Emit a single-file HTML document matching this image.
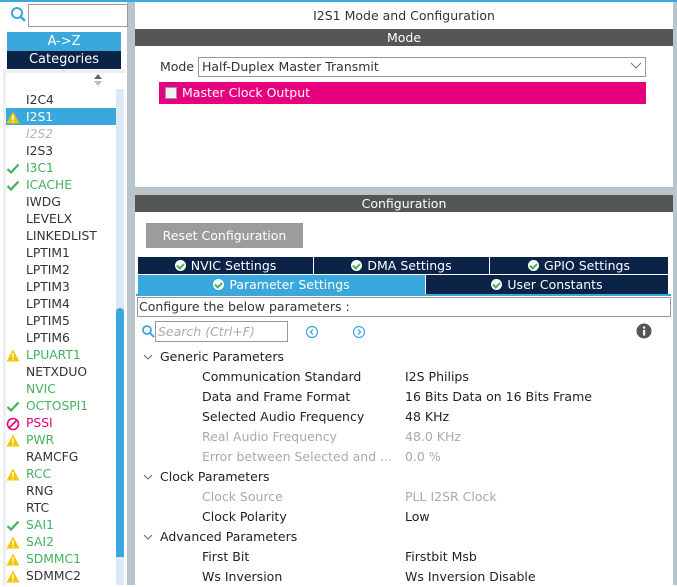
<!DOCTYPE html>
<html><head><meta charset="utf-8"><style>
*{margin:0;padding:0;box-sizing:border-box}
body{width:677px;height:585px;overflow:hidden;background:#fff;font-family:"DejaVu Sans","Liberation Sans",sans-serif;font-size:12.5px;color:#333;position:relative}
.a{position:absolute}
.it{position:absolute;left:26px;height:17px;line-height:17px;font-size:12.3px;color:#333}
.ic{position:absolute;left:-20px;top:0;width:16px;text-align:center}
.tab{position:absolute;background:#0b2347;color:#fff;text-align:center;font-size:12.5px;line-height:17px}
.ck{display:inline-block;width:11px;height:11px;border-radius:50%;background:#fff;position:relative;vertical-align:-1px;margin-right:5px}
.ck::after{content:"";position:absolute;left:3px;top:2px;width:3px;height:5px;border:solid #44b060;border-width:0 2px 2px 0;transform:rotate(45deg)}
.row{position:absolute;font-size:12.5px;line-height:20px;height:20px}
</style></head><body>
<div class="a" style="left:0;top:0;width:677px;height:2px;background:#3aa8dc"></div>
<div class="a" style="left:127px;top:2px;width:8px;height:583px;background:#b9c4cb"></div>
<div class="a" style="left:673px;top:2px;width:4px;height:583px;background:#b9c4cb"></div>
<svg class="a" style="left:10px;top:6px" width="18" height="18"><circle cx="7" cy="7" r="5" fill="none" stroke="#3aa8dc" stroke-width="2"/><line x1="11" y1="11" x2="15" y2="15" stroke="#3aa8dc" stroke-width="2.4"/></svg>
<div class="a" style="left:28px;top:4px;width:100px;height:23px;border:1px solid #999;background:#fff"></div>
<div class="a" style="left:7px;top:32px;width:114px;height:19px;background:#3aa8dc;color:#fff;text-align:center;line-height:19px;font-size:13px">A-&gt;Z</div>
<div class="a" style="left:7px;top:51px;width:114px;height:18px;background:#0b2347;color:#fff;text-align:center;line-height:18px;font-size:13px">Categories</div>
<div class="a" style="left:3px;top:70px;width:122px;height:515px;border-left:3px solid #eceff1;border-top:3px solid #eceff1"></div>
<div class="a" style="left:94px;top:74px;width:0;height:0;border:4px solid transparent;border-bottom:5px solid #666;border-top:0"></div>
<div class="a" style="left:94px;top:81px;width:0;height:0;border:4px solid transparent;border-top:5px solid #bbb;border-bottom:0"></div>
<div class="a" style="left:116px;top:89px;width:8px;height:496px;background:#dce9f5"></div>
<div class="a" style="left:116px;top:308px;width:8px;height:249px;background:#3aa8dc;border-radius:4px 4px 0 0"></div>
<div class="a" style="left:6px;top:108px;width:110px;height:17px;background:#3aa8dc"></div>
<div id="list"></div>
<div class="a" style="left:135px;top:7px;width:538px;text-align:center;font-size:12.5px;line-height:18px;color:#333">I2S1 Mode and Configuration</div>
<div class="a" style="left:135px;top:29px;width:538px;height:17px;background:#555756;color:#fff;text-align:center;line-height:17px;font-size:12.5px">Mode</div>
<div class="a" style="left:160px;top:58px;line-height:18px">Mode</div>
<div class="a" style="left:198px;top:57px;width:448px;height:20px;border:1px solid #999;line-height:18px;padding-left:3px">Half-Duplex Master Transmit</div>
<svg class="a" style="left:630px;top:62px" width="12" height="8"><polyline points="1,1 6,6 11,1" fill="none" stroke="#777" stroke-width="1"/></svg>
<div class="a" style="left:159px;top:82px;width:487px;height:22px;background:#e6007e;color:#fff;line-height:22px;padding-left:23px">Master Clock Output</div>
<div class="a" style="left:165px;top:87px;width:12px;height:12px;background:#f2f2f2;border:1px solid #999"></div>
<div class="a" style="left:135px;top:187px;width:538px;height:8px;background:#b9c4cb"></div>
<div class="a" style="left:135px;top:195px;width:538px;height:17px;background:#555756;color:#fff;text-align:center;line-height:17px">Configuration</div>
<div class="a" style="left:146px;top:223px;width:157px;height:25px;background:#9a9c9e;color:#fff;text-align:center;line-height:25px">Reset Configuration</div>
<div class="tab" style="left:138px;top:257px;width:175px;height:17px"><span class="ck"></span>NVIC Settings</div>
<div class="tab" style="left:314px;top:257px;width:175px;height:17px"><span class="ck"></span>DMA Settings</div>
<div class="tab" style="left:490px;top:257px;width:178px;height:17px"><span class="ck"></span>GPIO Settings</div>
<div class="tab" style="left:138px;top:275px;width:287px;height:19px;background:#3aa8dc;line-height:19px"><span class="ck"></span>Parameter Settings</div>
<div class="tab" style="left:426px;top:275px;width:242px;height:19px;line-height:19px"><span class="ck"></span>User Constants</div>
<div class="a" style="left:136px;top:294px;width:535px;height:2px;background:#3aa8dc"></div>
<div class="a" style="left:137px;top:297px;width:534px;height:20px;border:1px solid #999;line-height:18px;padding-left:1px">Configure the below parameters :</div>
<svg class="a" style="left:141px;top:324px" width="14" height="14"><circle cx="6" cy="6" r="4" fill="none" stroke="#3aa8dc" stroke-width="1.8"/><line x1="9" y1="9" x2="13" y2="13" stroke="#3aa8dc" stroke-width="2"/></svg>
<div class="a" style="left:155px;top:321px;width:133px;height:21px;border:1px solid #999;line-height:19px;padding-left:2px;color:#aaa;font-style:italic">Search (Ctrl+F)</div>
<svg class="a" style="left:305px;top:325px" width="14" height="14"><circle cx="7" cy="7" r="5.5" fill="none" stroke="#3aa8dc" stroke-width="1.2"/><polyline points="8,4.5 5.5,7 8,9.5" fill="none" stroke="#3aa8dc" stroke-width="1.3"/></svg>
<svg class="a" style="left:352px;top:325px" width="14" height="14"><circle cx="7" cy="7" r="5.5" fill="none" stroke="#3aa8dc" stroke-width="1.2"/><polyline points="6,4.5 8.5,7 6,9.5" fill="none" stroke="#3aa8dc" stroke-width="1.3"/></svg>
<svg class="a" style="left:636px;top:323px" width="16" height="16"><circle cx="8" cy="8" r="7.5" fill="#555"/><rect x="7" y="7" width="2.2" height="5.5" fill="#fff"/><circle cx="8.1" cy="4.6" r="1.2" fill="#fff"/></svg>
<div id="tree"></div>
<script>
var L=[["I2C4",""],["I2S1","w","#fff"],["I2S2","","#b5b5b5",1],["I2S3",""],["I3C1","c","g"],["ICACHE","c","g"],["IWDG",""],["LEVELX",""],["LINKEDLIST",""],["LPTIM1",""],["LPTIM2",""],["LPTIM3",""],["LPTIM4",""],["LPTIM5",""],["LPTIM6",""],["LPUART1","w","g"],["NETXDUO",""],["NVIC","","g"],["OCTOSPI1","c","g"],["PSSI","p","#e6007e"],["PWR","w","g"],["RAMCFG",""],["RCC","w","g"],["RNG",""],["RTC",""],["SAI1","c","g"],["SAI2","w","g"],["SDMMC1","w","g"],["SDMMC2","w"]];
var h="";L.forEach(function(r,i){var y=92+17*i;var col=r[2]=="g"?"#44b060":(r[2]||"#333");var ic="";
if(r[1]=="w")ic='<svg class="ic" style="top:2px" width="14" height="13"><polygon points="7,0.5 13.5,12.5 0.5,12.5" fill="#f5c400"/><rect x="6.3" y="4" width="1.4" height="5" fill="#fff"/><rect x="6.3" y="10" width="1.4" height="1.4" fill="#fff"/></svg>';
if(r[1]=="c")ic='<svg class="ic" style="top:2px" width="14" height="13"><polyline points="1.5,7 5,10.5 12.5,2.5" fill="none" stroke="#44b060" stroke-width="2.2"/></svg>';
if(r[1]=="p")ic='<svg class="ic" style="top:2px" width="14" height="14"><circle cx="7" cy="7" r="5.5" fill="none" stroke="#e6007e" stroke-width="1.6"/><line x1="3" y1="11" x2="11" y2="3" stroke="#e6007e" stroke-width="1.6"/></svg>';
h+='<div class="it" style="top:'+y+'px;color:'+col+(r[3]?';font-style:italic':'')+'">'+ic+r[0]+'</div>';});
document.getElementById("list").innerHTML=h;
var T=[[0,"Generic Parameters"],[1,"Communication Standard","I2S Philips"],[1,"Data and Frame Format","16 Bits Data on 16 Bits Frame"],[1,"Selected Audio Frequency","48 KHz"],[2,"Real Audio Frequency","48.0 KHz"],[2,"Error between Selected and ...","0.0 %"],[0,"Clock Parameters"],[2,"Clock Source","PLL I2SR Clock"],[1,"Clock Polarity","Low"],[0,"Advanced Parameters"],[1,"First Bit","Firstbit Msb"],[1,"Ws Inversion","Ws Inversion Disable"]];
h="";T.forEach(function(r,i){var y=347+20*i;
if(r[0]==0)h+='<svg class="a" style="left:143px;top:'+(y+7)+'px" width="10" height="7"><polyline points="1,1 5,5 9,1" fill="none" stroke="#666" stroke-width="1"/></svg><div class="row" style="left:160px;top:'+y+'px;color:#222">'+r[1]+'</div>';
else{var c=r[0]==2?"#a9a9a9":"#222";h+='<div class="row" style="left:202px;top:'+y+'px;color:'+c+'">'+r[1]+'</div><div class="row" style="left:405px;top:'+y+'px;color:'+c+'">'+r[2]+'</div>';}});
document.getElementById("tree").innerHTML=h;
</script>
</body></html>
